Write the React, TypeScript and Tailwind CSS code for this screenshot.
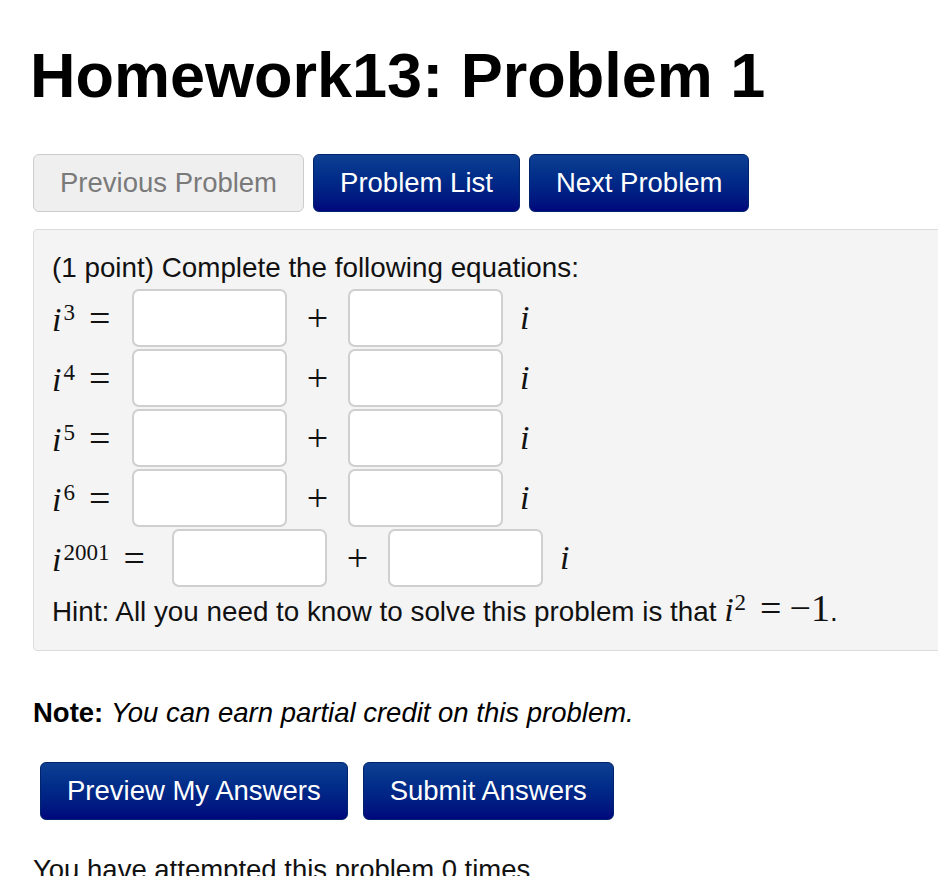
import type { ReactNode } from "react";

const sans = "font-['Liberation_Sans',Arial,sans-serif]";
const serif = "font-['Liberation_Serif','Times_New_Roman',serif]";

function BlueButton({ children }: { children: ReactNode }) {
  return (
    <button className="h-[58px] rounded-[6px] border border-[#00246b] bg-gradient-to-b from-[#0f3f92] to-[#00067c] px-[26px] text-[27.5px] leading-none text-white">
      {children}
    </button>
  );
}

function Box() {
  return (
    <div className="h-[58px] w-[155px] shrink-0 rounded-[7px] border-2 border-[#cfcfcf] bg-white" />
  );
}

function Row({ power, wide }: { power: string; wide?: boolean }) {
  return (
    <div className="flex h-[60px] items-start">
      <div className={`flex h-[58px] items-center ${wide ? "w-[120px]" : "w-[80px]"}`}>
        <span className={`${serif} text-[34px] leading-none whitespace-nowrap`}>
          <i>i</i>
          <sup className="ml-[2px] text-[23px] not-italic">{power}</sup>
          <span className="ml-[14px] text-[38px]">=</span>
        </span>
      </div>
      <Box />
      <div className={`${serif} flex h-[58px] w-[61px] items-center justify-center text-[38px] leading-none`}>
        +
      </div>
      <Box />
      <div className={`${serif} ml-[17px] flex h-[58px] items-center text-[34px] italic leading-none`}>
        i
      </div>
    </div>
  );
}

export default function App() {
  return (
    <div className={`${sans} min-h-screen w-full overflow-hidden bg-white pl-[33px] text-[#111]`}>
      <h1 className="-ml-[3px] pt-[41px] text-[63px] font-bold leading-[68px] text-black">
        Homework13: Problem 1
      </h1>

      <div className="mt-[45px] flex gap-[9px]">
        <button className="h-[58px] rounded-[6px] border border-[#cccccc] bg-[#efefef] px-[26px] text-[27.5px] leading-none text-[#7a7a7a]">
          Previous Problem
        </button>
        <BlueButton>Problem List</BlueButton>
        <BlueButton>Next Problem</BlueButton>
      </div>

      <div className="mt-[17px] w-[960px] rounded-[4px] border border-[#dcdcdc] bg-[#f4f4f4] pb-[27px] pl-[18px] pt-[21px] text-[27.8px] leading-[34px]">
        <p>(1 point) Complete the following equations:</p>
        <div className="mt-[4px]">
          <Row power="3" />
          <Row power="4" />
          <Row power="5" />
          <Row power="6" />
          <Row power="2001" wide />
        </div>
        <p className="h-[34px] whitespace-nowrap">
          Hint: All you need to know to solve this problem is that{" "}
          <span className={`${serif} text-[34px] leading-none`}>
            <i>i</i>
            <sup className="ml-[1px] text-[23px]">2</sup>
            <span className="ml-[14px] text-[38px]">=</span>
            <span className="ml-[8px] text-[38px]">−1</span>
          </span>
          .
        </p>
      </div>

      <p className="mt-[45px] text-[27.5px] leading-[34px] text-black">
        <b>Note:</b> <i>You can earn partial credit on this problem.</i>
      </p>

      <div className="mt-[32px] ml-[7px] flex gap-[15px]">
        <BlueButton>Preview My Answers</BlueButton>
        <BlueButton>Submit Answers</BlueButton>
      </div>

      <p className="mt-[33px] text-[27.5px] leading-[34px] text-[#111]">
        You have attempted this problem 0 times.
      </p>
    </div>
  );
}
